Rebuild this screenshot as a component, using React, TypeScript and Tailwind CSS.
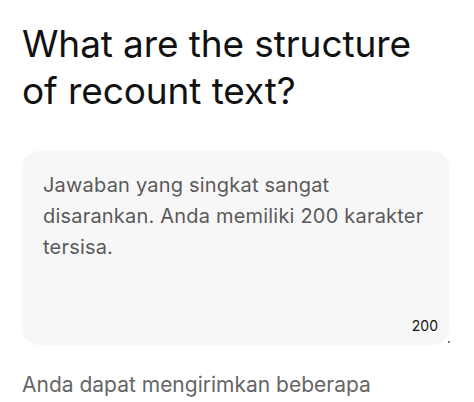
export default function App() {
  return (
    <div className="min-h-screen bg-white" style={{ fontFamily: "Inter, 'Noto Sans', sans-serif" }}>
      <div className="pl-[22px] pr-[25px] pt-[20px]">
        <h1 className="text-[37px] leading-[47px] font-normal text-[#111] tracking-[-0.1px]">
          What are the structure
          <br />
          of recount text?
        </h1>

        <div className="relative mt-[37px] h-[194px] rounded-[16px] bg-[#f7f7f7] flex flex-col justify-between pl-[21px] pr-[11px] pt-[19px] pb-[10px]">
          <p className="text-[20px] leading-[31px] tracking-[0.2px] text-[#5a5a5a]">
            Jawaban yang singkat sangat
            <br />
            disarankan. Anda memiliki 200 karakter
            <br />
            tersisa.
          </p>
          <div className="text-right text-[14px] leading-[18px] text-[#111]">200</div>
          <span className="absolute -right-[1px] bottom-[2px] h-[2px] w-[2px] rounded-full bg-[#555]" />
        </div>

        <p className="mt-[26px] text-[21px] leading-[28px] text-[#666]">Anda dapat mengirimkan beberapa</p>
      </div>
    </div>
  );
}
